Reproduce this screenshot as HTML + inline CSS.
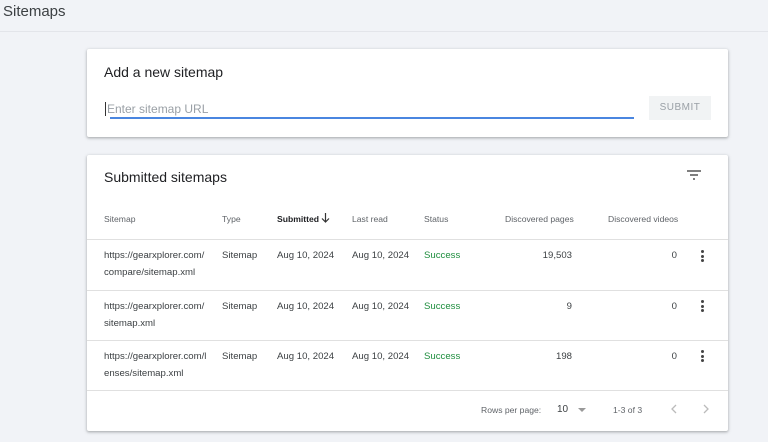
<!DOCTYPE html><html><head><style>
body{margin:0;width:768px;height:442px;background:#f1f3f7;font-family:"Liberation Sans",sans-serif;position:relative;overflow:hidden;color:#202124}
.a{position:absolute;white-space:nowrap}
.card{position:absolute;left:87px;width:641px;background:#fff;box-shadow:0 1px 2px rgba(60,64,67,.3),0 1px 3px 1px rgba(60,64,67,.12);border-radius:2px}
.h{font-size:8.6px;color:#5f6368}
.c{font-size:9.6px;color:#3c4043}
.g{color:#1e8e3e}
.line{position:absolute;left:0;width:641px;height:1px;background:#e0e0e0}
.dots{position:absolute;width:3px}
.dots i{display:block;width:3px;height:3px;border-radius:50%;background:#444;margin-bottom:1.5px}
</style></head><body>
<div class="a" style="left:3px;top:3px;font-size:15px;color:#3c4043">Sitemaps</div>
<div class="a" style="left:0;top:31px;width:768px;height:1px;background:#e3e5ea"></div>
<div class="card" style="top:49px;height:88px">
<div class="a" style="left:17px;top:15px;font-size:14px">Add a new sitemap</div>
<div class="a" style="left:18px;top:53px;width:1px;height:14px;background:#333"></div>
<div class="a" style="left:20px;top:53px;font-size:12px;color:#9aa0a6">Enter sitemap URL</div>
<div class="a" style="left:23px;top:68px;width:524px;height:2px;background:#4a86e0"></div>
<div class="a" style="left:562px;top:47px;width:62px;height:24px;background:#f1f3f4;color:#9aa0a6;font-size:10px;text-align:center;line-height:24px;letter-spacing:.5px">SUBMIT</div>
</div>
<div class="card" style="top:155px;height:276px">
<div class="a" style="left:17px;top:14px;font-size:14px">Submitted sitemaps</div>
<svg class="a" style="left:600px;top:15px" width="14" height="10"><path d="M0 1h14M3 5h8M6 9h2" stroke="#555" stroke-width="1.4"/></svg>
<div class="a h" style="left:17px;top:59px">Sitemap</div>
<div class="a h" style="left:135px;top:59px">Type</div>
<div class="a h" style="left:190px;top:59px;color:#202124;font-weight:bold">Submitted</div>
<svg class="a" style="left:234px;top:58px" width="9" height="10"><path d="M4.5 0v9M1 5.5l3.5 3.5 3.5-3.5" stroke="#333" stroke-width="1.2" fill="none"/></svg>
<div class="a h" style="left:265px;top:59px">Last read</div>
<div class="a h" style="left:337px;top:59px">Status</div>
<div class="a h" style="left:418px;top:59px">Discovered pages</div>
<div class="a h" style="left:521px;top:59px">Discovered videos</div>
<div class="line" style="top:84px"></div>
<div class="a c" style="left:17px;top:92px;line-height:17px">https://gearxplorer.com/<br>compare/sitemap.xml</div>
<div class="a c" style="left:135px;top:92px;line-height:17px">Sitemap</div>
<div class="a c" style="left:190px;top:92px;line-height:17px">Aug 10, 2024</div>
<div class="a c" style="left:265px;top:92px;line-height:17px">Aug 10, 2024</div>
<div class="a c g" style="left:337px;top:92px;line-height:17px">Success</div>
<div class="a c" style="right:156px;top:92px;line-height:17px">19,503</div>
<div class="a c" style="right:51px;top:92px;line-height:17px">0</div>
<div class="dots" style="left:614px;top:95px"><i></i><i></i><i></i></div>
<div class="line" style="top:135px"></div>
<div class="a c" style="left:17px;top:143px;line-height:17px">https://gearxplorer.com/<br>sitemap.xml</div>
<div class="a c" style="left:135px;top:143px;line-height:17px">Sitemap</div>
<div class="a c" style="left:190px;top:143px;line-height:17px">Aug 10, 2024</div>
<div class="a c" style="left:265px;top:143px;line-height:17px">Aug 10, 2024</div>
<div class="a c g" style="left:337px;top:143px;line-height:17px">Success</div>
<div class="a c" style="right:156px;top:143px;line-height:17px">9</div>
<div class="a c" style="right:51px;top:143px;line-height:17px">0</div>
<div class="dots" style="left:614px;top:145px"><i></i><i></i><i></i></div>
<div class="line" style="top:185px"></div>
<div class="a c" style="left:17px;top:193px;line-height:17px">https://gearxplorer.com/l<br>enses/sitemap.xml</div>
<div class="a c" style="left:135px;top:193px;line-height:17px">Sitemap</div>
<div class="a c" style="left:190px;top:193px;line-height:17px">Aug 10, 2024</div>
<div class="a c" style="left:265px;top:193px;line-height:17px">Aug 10, 2024</div>
<div class="a c g" style="left:337px;top:193px;line-height:17px">Success</div>
<div class="a c" style="right:156px;top:193px;line-height:17px">198</div>
<div class="a c" style="right:51px;top:193px;line-height:17px">0</div>
<div class="dots" style="left:614px;top:195px"><i></i><i></i><i></i></div>
<div class="line" style="top:235px"></div>
<div class="a h" style="left:394px;top:250px">Rows per page:</div>
<div class="a" style="left:470px;top:249px;font-size:10px;color:#3c4043">10</div>
<svg class="a" style="left:491px;top:253px" width="8" height="4"><path d="M0 0h8L4 4z" fill="#999"/></svg>
<div class="a h" style="left:526px;top:250px">1-3 of 3</div>
<svg class="a" style="left:584px;top:249px" width="6" height="10"><path d="M5 1L1 5l4 4" stroke="#bbb" fill="none" stroke-width="1.3"/></svg>
<svg class="a" style="left:616px;top:249px" width="6" height="10"><path d="M1 1l4 4-4 4" stroke="#bbb" fill="none" stroke-width="1.3"/></svg>
</div>
</body></html>
